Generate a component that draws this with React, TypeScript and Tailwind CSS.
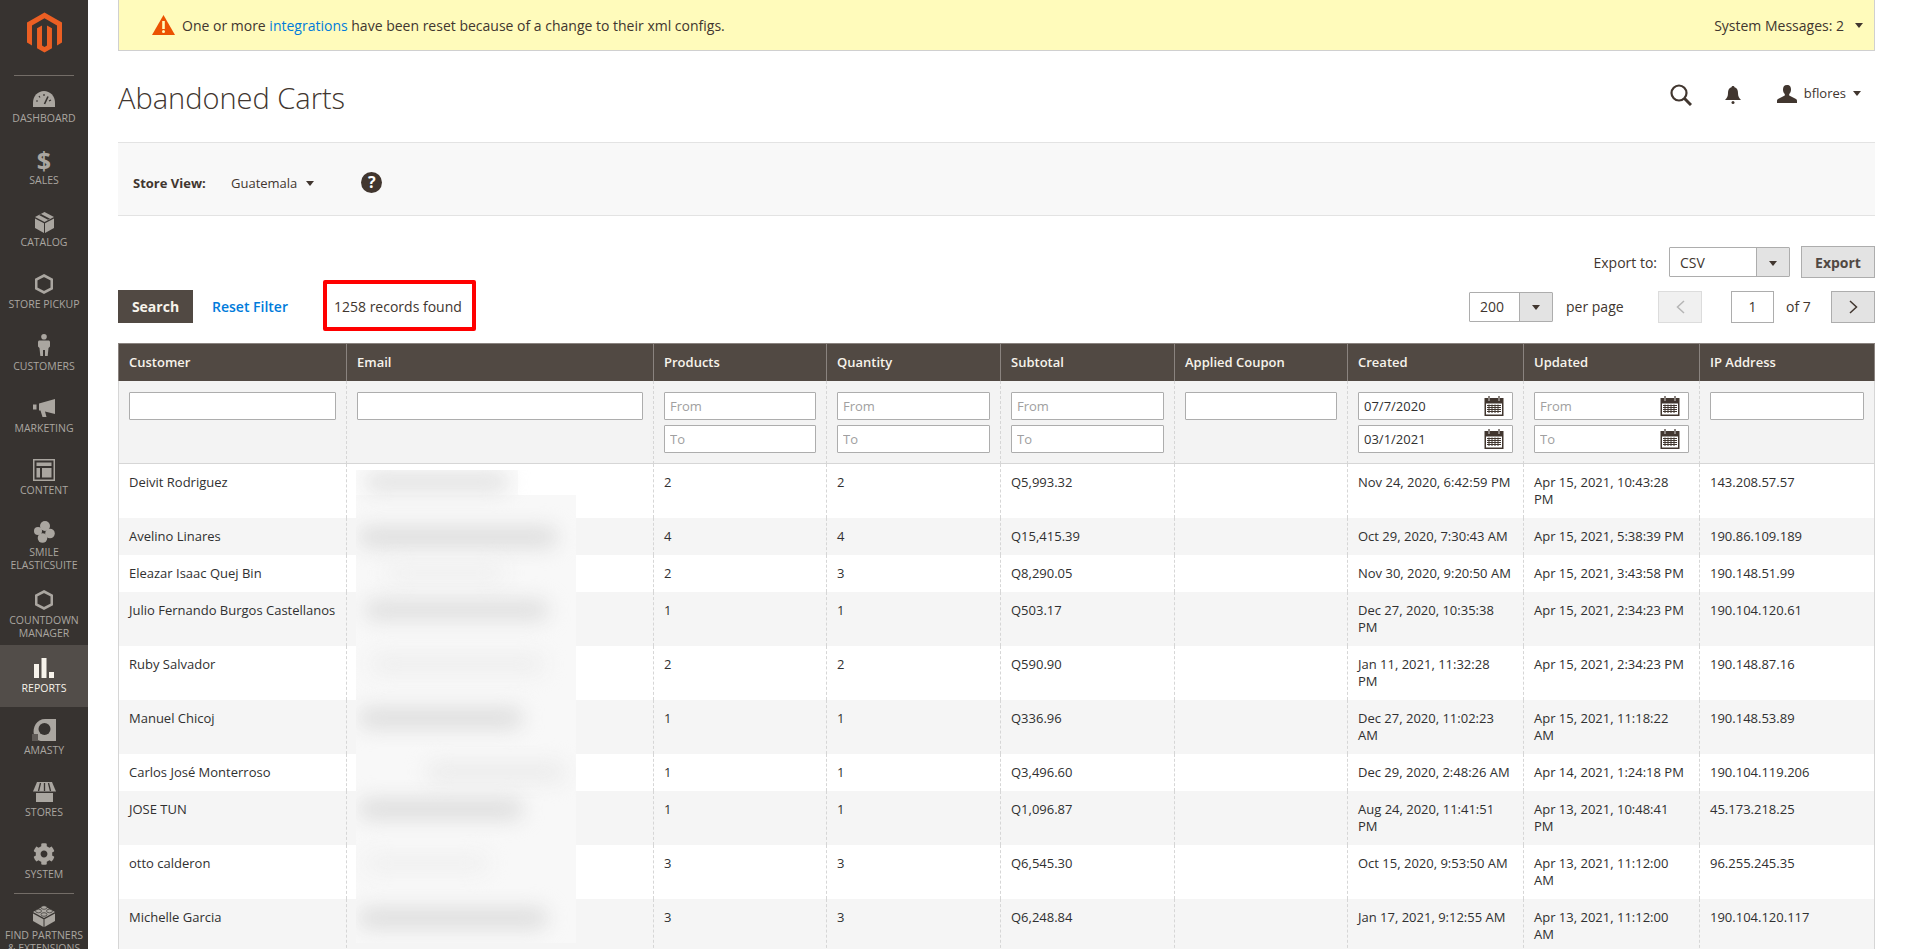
import { ReactNode } from "react";
import { FaCog } from "react-icons/fa";

const rows = [
  ["Deivit Rodriguez", "2", "2", "Q5,993.32", "Nov 24, 2020, 6:42:59 PM", "Apr 15, 2021, 10:43:28 PM", "143.208.57.57"],
  ["Avelino Linares", "4", "4", "Q15,415.39", "Oct 29, 2020, 7:30:43 AM", "Apr 15, 2021, 5:38:39 PM", "190.86.109.189"],
  ["Eleazar Isaac Quej Bin", "2", "3", "Q8,290.05", "Nov 30, 2020, 9:20:50 AM", "Apr 15, 2021, 3:43:58 PM", "190.148.51.99"],
  ["Julio Fernando Burgos Castellanos", "1", "1", "Q503.17", "Dec 27, 2020, 10:35:38 PM", "Apr 15, 2021, 2:34:23 PM", "190.104.120.61"],
  ["Ruby Salvador", "2", "2", "Q590.90", "Jan 11, 2021, 11:32:28 PM", "Apr 15, 2021, 2:34:23 PM", "190.148.87.16"],
  ["Manuel Chicoj", "1", "1", "Q336.96", "Dec 27, 2020, 11:02:23 AM", "Apr 15, 2021, 11:18:22 AM", "190.148.53.89"],
  ["Carlos José Monterroso", "1", "1", "Q3,496.60", "Dec 29, 2020, 2:48:26 AM", "Apr 14, 2021, 1:24:18 PM", "190.104.119.206"],
  ["JOSE TUN", "1", "1", "Q1,096.87", "Aug 24, 2020, 11:41:51 PM", "Apr 13, 2021, 10:48:41 PM", "45.173.218.25"],
  ["otto calderon", "3", "3", "Q6,545.30", "Oct 15, 2020, 9:53:50 AM", "Apr 13, 2021, 11:12:00 AM", "96.255.245.35"],
  ["Michelle Garcia", "3", "3", "Q6,248.84", "Jan 17, 2021, 9:12:55 AM", "Apr 13, 2021, 11:12:00 AM", "190.104.120.117"],
];

const columns = [
  { name: "Customer", width: 228 },
  { name: "Email", width: 307 },
  { name: "Products", width: 173 },
  { name: "Quantity", width: 174 },
  { name: "Subtotal", width: 174 },
  { name: "Applied Coupon", width: 173 },
  { name: "Created", width: 176 },
  { name: "Updated", width: 176 },
  { name: "IP Address", width: 176 },
];

// blurred-out emails: center is the page y of the text line
const blurBars = [
  { center: 482, left: 8, width: 145, color: "#e2e2e2" },
  { center: 537, left: 2, width: 200, color: "#dcdcdc" },
  { center: 573, left: 30, width: 120, color: "#f0f0f0" },
  { center: 610, left: 8, width: 185, color: "#dedede" },
  { center: 664, left: 14, width: 175, color: "#eeeeee" },
  { center: 718, left: 2, width: 165, color: "#dcdcdc" },
  { center: 772, left: 70, width: 140, color: "#ebebeb" },
  { center: 809, left: 2, width: 165, color: "#dcdcdc" },
  { center: 863, left: 8, width: 125, color: "#f0f0f0" },
  { center: 918, left: 2, width: 190, color: "#dcdcdc" },
];

const Caret = () => (
  <span className="inline-block w-0 h-0 border-x-[4px] border-t-[5px] border-x-transparent border-t-[#41362f]" />
);

const Hexagon = () => (
  <svg width="18" height="20" viewBox="0 0 18 20" fill="none" stroke="#aaa6a0" strokeWidth="2.6">
    <polygon points="9,1.5 16.8,5.7 16.8,14.3 9,18.5 1.2,14.3 1.2,5.7" />
  </svg>
);

const Gauge = () => (
  <svg width="22" height="16" viewBox="0 0 22 16" className="mt-[2px]">
    <path d="M0 16v-4.500C0 5 5 0 11 0s11 5 11 11.500V16z" fill="#aaa6a0" />
    <path d="M11.500 13 15 5.500" stroke="#373330" strokeWidth="1.600" />
    <path d="M3 10h2M6 5l1 1.500M11 3v2M18 9l-2 1" stroke="#373330" strokeWidth="1.200" />
  </svg>
);

const Box = () => (
  <svg width="19" height="21" viewBox="0 0 19 21" fill="#aaa6a0">
    <polygon points="9.500,0 19,5 9.500,10 0,5" />
    <polygon points="4,3 13,7.800 15,6.800 6,2" fill="#373330" />
    <polygon points="0,6.500 9,11.300 9,21 0,16" />
    <polygon points="10,11.300 19,6.500 19,16 10,21" />
  </svg>
);

const Person = () => (
  <svg width="12" height="22" viewBox="0 0 12 22" fill="#aaa6a0" className="-mt-[2px]">
    <circle cx="6" cy="2.800" r="2.800" />
    <path d="M1.500 6.500h9c.8 0 1.500.7 1.500 1.500v4.500l-1.500 1.500-.8 8H7v-6H5v6H2.300l-.8-8L0 12.500V8c0-.8.7-1.500 1.500-1.500z" />
  </svg>
);

const Megaphone = () => (
  <svg width="22" height="18" viewBox="0 0 22 18" fill="#aaa6a0">
    <polygon points="0,5.500 3.500,5.500 3.500,10.500 0,10.500" />
    <polygon points="6,4.500 22,0 22,15 12,12.500 13.500,18 9.500,18 7.500,11.500 6,11.500" />
  </svg>
);

const Layout = () => (
  <svg width="22" height="22" viewBox="0 0 22 22">
    <rect width="22" height="22" fill="#aaa6a0" />
    <rect x="1.500" y="1.500" width="19" height="19" fill="#373330" />
    <rect x="3.500" y="3.500" width="15" height="3.500" fill="#aaa6a0" />
    <rect x="3.500" y="9" width="3.500" height="9.500" fill="#aaa6a0" />
    <rect x="9" y="9" width="9.500" height="9.500" fill="#aaa6a0" />
  </svg>
);

const Cluster = () => (
  <svg width="21" height="22" viewBox="0 0 21 22" fill="#aaa6a0">
    <circle cx="11" cy="5" r="5" />
    <circle cx="4" cy="10" r="4" />
    <circle cx="16" cy="12.500" r="4.800" />
    <circle cx="8.500" cy="17" r="4.800" />
  </svg>
);

const Bars = () => (
  <svg width="20" height="20" viewBox="0 0 20 20" fill="#f7f3eb">
    <rect x="0" y="6" width="5" height="14" />
    <rect x="7.500" y="0" width="5" height="20" />
    <rect x="15" y="14" width="5" height="6" />
  </svg>
);

const Amasty = () => (
  <svg width="24" height="22" viewBox="0 0 24 22">
    <path d="M13 0h11v22H10c-3 0-6-1-8-6C0 8 5 0 13 0z" fill="#aaa6a0" />
    <circle cx="12.500" cy="10" r="6" fill="#373330" />
    <rect x="0" y="15" width="6" height="7" fill="#5f5a56" />
  </svg>
);

const Store = () => (
  <svg width="23" height="20" viewBox="0 0 23 20" fill="#aaa6a0">
    <polygon points="4,0 19,0 23,9.500 0,9.500" />
    <path d="M7.500 1 5.500 9M11.500 1v8M15.500 1l2 8" stroke="#373330" strokeWidth="1.300" />
    <rect x="3" y="11" width="17" height="9" />
  </svg>
);

const Brick = () => (
  <svg width="22" height="23" viewBox="0 0 22 23" fill="#aaa6a0">
    <polygon points="11,2 22,8 11,14 0,8" />
    <ellipse cx="11" cy="3.500" rx="3" ry="1.800" stroke="#373330" strokeWidth="0.700" />
    <ellipse cx="5.500" cy="7" rx="3" ry="1.800" stroke="#373330" strokeWidth="0.700" />
    <ellipse cx="16.500" cy="7" rx="3" ry="1.800" stroke="#373330" strokeWidth="0.700" />
    <ellipse cx="11" cy="10.500" rx="3" ry="1.800" stroke="#373330" strokeWidth="0.700" />
    <polygon points="0,9.500 10.500,15.300 10.500,23 0,17" />
    <polygon points="11.500,15.300 22,9.500 22,17 11.500,23" />
  </svg>
);

const navItems: { label: ReactNode; icon: ReactNode; tall?: boolean; active?: boolean }[] = [
  { label: "Dashboard", icon: <Gauge /> },
  { label: "Sales", icon: <span className="block h-[22px] text-[25px] leading-[22px] font-bold text-[#aaa6a0]">$</span> },
  { label: "Catalog", icon: <Box /> },
  { label: "Store Pickup", icon: <Hexagon /> },
  { label: "Customers", icon: <Person /> },
  { label: "Marketing", icon: <Megaphone /> },
  { label: "Content", icon: <Layout /> },
  { label: <>Smile<br />Elasticsuite</>, icon: <Cluster />, tall: true },
  { label: <>Countdown<br />Manager</>, icon: <Hexagon />, tall: true },
  { label: "Reports", icon: <Bars />, active: true },
  { label: "Amasty", icon: <Amasty /> },
  { label: "Stores", icon: <Store /> },
  { label: "System", icon: <FaCog size={22} color="#aaa6a0" /> },
];

const NavItem = ({ label, icon, tall, active }: (typeof navItems)[number]) => (
  <div
    className={`flex flex-col items-center pt-[11px] ${tall ? "h-[68px]" : "h-[62px]"} ${
      active ? "bg-[#524d49] text-[#f7f3eb]" : "text-[#aaa6a0]"
    }`}
  >
    <div className="flex h-[24px] items-center justify-center">{icon}</div>
    <div className="mt-[2px] whitespace-nowrap text-center text-[10.500px] uppercase leading-[13px]">{label}</div>
  </div>
);

const Sidebar = () => (
  <aside className="w-[88px] shrink-0 bg-[#373330]">
    <div className="flex h-[75px] items-start justify-center pt-[12px]">
      <svg width="35" height="41" viewBox="0 0 43.600 50" fill="#eb5f23">
        <path d="M43.600 12.500v25l-6.200 3.600V16.200L21.800 7.200 6.200 16.200v24.900L0 37.500v-25L21.800 0z" />
        <path d="M24.900 41.200l-3.100 1.800-3.100-1.800V16.200l-6.200 3.600v24.900L21.800 50l9.300-5.300V19.800l-6.200-3.600z" />
      </svg>
    </div>
    <div className="mx-[14px] h-px bg-[#736d67]" />
    <nav className="-mt-px">
      {navItems.map((item, index) => (
        <NavItem key={index} {...item} />
      ))}
    </nav>
    <div className="mx-[14px] h-px bg-[#736d67]" />
    <div className="-mt-px">
      <NavItem
        icon={<Brick />}
        label={<>Find Partners<br />&amp; Extensions</>}
      />
    </div>
  </aside>
);

const CalendarIcon = () => (
  <svg width="20" height="20" viewBox="0 0 20 20" className="absolute right-[9px] top-[4px]">
    <rect x="0.500" y="2" width="19" height="18" fill="#41362f" />
    <rect x="2" y="7.500" width="16" height="11" fill="#fff" />
    <rect x="4" y="0" width="2" height="5" fill="#8a837f" />
    <rect x="14" y="0" width="2" height="5" fill="#8a837f" />
    <path
      d="M3 9.500h14M3 11.500h14M3 13.500h14M3 15.500h14M5 8.500v8.500M8 8.500v8.500M11 8.500v8.500M14 8.500v8.500"
      stroke="#41362f"
      strokeWidth="1"
    />
  </svg>
);

const FilterInput = ({
  placeholder,
  value,
  calendar,
}: {
  placeholder?: string;
  value?: string;
  calendar?: boolean;
}) => (
  <div className="relative h-[28px]">
    <input
      readOnly
      placeholder={placeholder}
      value={value ?? ""}
      className="block h-[28px] w-full rounded-[1px] border border-[#adadad] bg-white px-[5px] text-[13px] text-[#303030] placeholder:text-[#a0a0a0] focus:outline-none"
    />
    {calendar && <CalendarIcon />}
  </div>
);

const filterCell =
  "border-l border-b border-[#d6d6d6] [border-left-style:dashed] px-[10px] pt-[11px] pb-[10px] align-top";
const dashedCell = "border-l border-dashed border-[#d6d6d6] p-[10px] align-top";

const GridTable = () => (
  <div className="relative mt-[20px]">
    <table className="w-full table-fixed border-separate border-spacing-0 text-[13px] leading-[17px] text-[#303030]">
      <colgroup>
        {columns.map((c) => (
          <col key={c.name} style={{ width: c.width }} />
        ))}
      </colgroup>
      <thead>
        <tr className="bg-[#514943]">
          {columns.map((c) => (
            <th
              key={c.name}
              className="h-[38px] border-l border-t border-[#8a837f] px-[10px] text-left font-semibold text-[#f7f3eb] last:border-r"
            >
              {c.name}
            </th>
          ))}
        </tr>
        <tr className="bg-[#f3f3f3]">
          <td className={`${filterCell} [border-left-style:solid]`}>
            <FilterInput />
          </td>
          <td className={filterCell}>
            <FilterInput />
          </td>
          {[0, 1, 2].map((i) => (
            <td key={i} className={filterCell}>
              <div className="flex flex-col gap-[5px]">
                <FilterInput placeholder="From" />
                <FilterInput placeholder="To" />
              </div>
            </td>
          ))}
          <td className={filterCell}>
            <FilterInput />
          </td>
          <td className={filterCell}>
            <div className="flex flex-col gap-[5px]">
              <FilterInput value="07/7/2020" calendar />
              <FilterInput value="03/1/2021" calendar />
            </div>
          </td>
          <td className={filterCell}>
            <div className="flex flex-col gap-[5px]">
              <FilterInput placeholder="From" calendar />
              <FilterInput placeholder="To" calendar />
            </div>
          </td>
          <td className={`${filterCell} border-r`}>
            <FilterInput />
          </td>
        </tr>
      </thead>
      <tbody>
        {rows.map((r, index) => (
          <tr key={index} className={index % 2 === 0 ? "bg-white" : "bg-[#f5f5f5]"}>
            <td className="border-l border-[#d6d6d6] p-[10px] align-top">{r[0]}</td>
            <td className={dashedCell} />
            <td className={dashedCell}>{r[1]}</td>
            <td className={dashedCell}>{r[2]}</td>
            <td className={dashedCell}>{r[3]}</td>
            <td className={dashedCell} />
            <td className={`${dashedCell} pr-[12px]`}>{r[4]}</td>
            <td className={dashedCell}>{r[5]}</td>
            <td className="border-x border-[#d6d6d6] [border-left-style:dashed] p-[10px] align-top">{r[6]}</td>
          </tr>
        ))}
      </tbody>
    </table>

    <div className="absolute left-[238px] top-[127px] h-[26px] w-[162px] bg-[#fbfbfb]" />
    <div className="absolute left-[238px] top-[152px] h-[448px] w-[220px] bg-[#f8f8f8]" />
    <div className="absolute left-[238px] top-[127px] h-[473px] w-[220px] overflow-hidden">
      {blurBars.map((b) => (
        <div
          key={b.center}
          className="absolute h-[20px] rounded-full blur-[10px]"
          style={{ top: b.center - 470 - 10, left: b.left, width: b.width, backgroundColor: b.color }}
        />
      ))}
    </div>
  </div>
);

export default function App() {
  return (
    <div className="flex h-[949px] overflow-hidden bg-white font-['Open_Sans',sans-serif] text-[14px] text-[#41362f]">
      <Sidebar />
      <main className="min-w-0 flex-1 px-[30px]">
        <div className="flex h-[51px] items-center justify-between border-x border-b border-[#d0d0d0] bg-[#fffbbb] pl-[33px] pr-[11px]">
          <div className="flex items-center">
            <svg width="23" height="20" viewBox="0 0 23 20">
              <polygon points="11.500,0 23,20 0,20" fill="#eb5202" />
              <rect x="10.200" y="6" width="2.600" height="8" fill="#fffbbb" />
              <circle cx="11.500" cy="16.500" r="1.500" fill="#fffbbb" />
            </svg>
            <span className="ml-[7px]">
              One or more <span className="text-[#007bdb]">integrations</span> have been reset because of a change to their xml configs.
            </span>
          </div>
          <div className="flex items-center gap-[11px]">
            <span>System Messages: 2</span>
            <Caret />
          </div>
        </div>

        <div className="flex h-[91px] items-center justify-between">
          <h1 className="mt-[2px] text-[29px] font-light leading-[36px]">Abandoned Carts</h1>
          <div className="flex items-center pr-[14px] pb-[4px]">
            <svg width="22" height="22" viewBox="0 0 22 22" fill="none" stroke="#41362f">
              <circle cx="9" cy="9" r="7.500" strokeWidth="2.200" />
              <path d="M14.500 14.500 21 21" strokeWidth="3" />
            </svg>
            <svg width="16" height="18" viewBox="0 0 16 18" fill="#41362f" className="ml-[33px]">
              <path d="M8 0c1 0 1.500.6 1.500 1.300C12 2 13 4 13 7c0 3.500 1 5 3 7H0c2-2 3-3.500 3-7 0-3 1-5 3.500-5.700C6.500.6 7 0 8 0z" />
              <circle cx="8" cy="16.500" r="1.500" />
            </svg>
            <svg width="20" height="18" viewBox="0 0 20 18" fill="#41362f" className="ml-[36px] -mt-[2px]">
              <path d="M10 0c3 0 4 2 4 4.500 0 2-.8 3.500-1.800 4.500v1.500L19 14c.7.4 1 1 1 1.700V18H0v-2.300c0-.7.3-1.300 1-1.700l6.800-3.500V9C6.800 8 6 6.500 6 4.500 6 2 7 0 10 0z" />
            </svg>
            <span className="ml-[7px] -mt-[2px] text-[13px]">bflores</span>
            <span className="ml-[7px] -mt-[2px] flex"><Caret /></span>
          </div>
        </div>

        <div className="flex h-[74px] items-center border-y border-[#e3e3e3] bg-[#f8f8f8] pl-[15px] pt-[9px]">
          <span className="w-[98px] text-[13px] font-bold">Store View:</span>
          <span className="text-[13px]">Guatemala</span>
          <span className="ml-[9px] flex"><Caret /></span>
          <span className="ml-[47px] mb-[3px] flex h-[21px] w-[21px] items-center justify-center rounded-full bg-[#41362f] text-[16px] font-bold text-white">
            ?
          </span>
        </div>

        <div className="mt-[30px] flex h-[32px] items-center justify-end text-[14px]">
          <span className="mr-[12px]">Export to:</span>
          <div className="flex h-[30px] w-[121px] rounded-[1px] border border-[#adadad] bg-white">
            <span className="flex-1 self-center pl-[10px]">CSV</span>
            <span className="flex w-[33px] items-center justify-center border-l border-[#adadad] bg-[#e3e3e3] pt-[2px]"><Caret /></span>
          </div>
          <button className="ml-[11px] h-[32px] w-[74px] border border-[#adadad] bg-[#e3e3e3] font-bold text-[#514943]">Export</button>
        </div>

        <div className="mt-[12px] flex h-[33px] items-center justify-between">
          <div className="flex items-center">
            <button className="h-[33px] w-[75px] bg-[#514943] text-[14px] font-bold text-[#f7f3eb]">Search</button>
            <span className="ml-[19px] font-semibold text-[#007bdb]">Reset Filter</span>
            <span className="relative ml-[46px]">
              1258 records found
              <span className="absolute -left-[11px] -right-[14px] -top-[16px] -bottom-[14px] rounded-[2px] border-[4px] border-[#ff0000]" />
            </span>
          </div>
          <div className="flex items-center">
            <div className="flex h-[30px] w-[84px] rounded-[1px] border border-[#adadad] bg-white">
              <span className="flex-1 self-center pl-[10px]">200</span>
              <span className="flex w-[33px] items-center justify-center border-l border-[#adadad] bg-[#e3e3e3] pt-[2px]"><Caret /></span>
            </div>
            <span className="ml-[13px] w-[92px]">per page</span>
            <span className="flex h-[32px] w-[44px] items-center justify-center border border-[#dcdcdc] bg-[#f0f0f0]">
              <svg width="9" height="14" viewBox="0 0 9 14" fill="none" stroke="#b5b5b5" strokeWidth="1.500"><path d="M8 1 1.500 7 8 13" /></svg>
            </span>
            <span className="ml-[29px] flex h-[32px] w-[43px] items-center justify-center border border-[#adadad] bg-white">1</span>
            <span className="ml-[12px] w-[45px]">of 7</span>
            <span className="flex h-[32px] w-[44px] items-center justify-center border border-[#adadad] bg-[#e3e3e3]">
              <svg width="9" height="14" viewBox="0 0 9 14" fill="none" stroke="#41362f" strokeWidth="1.500"><path d="M1 1 7.500 7 1 13" /></svg>
            </span>
          </div>
        </div>

        <GridTable />
      </main>
    </div>
  );
}
